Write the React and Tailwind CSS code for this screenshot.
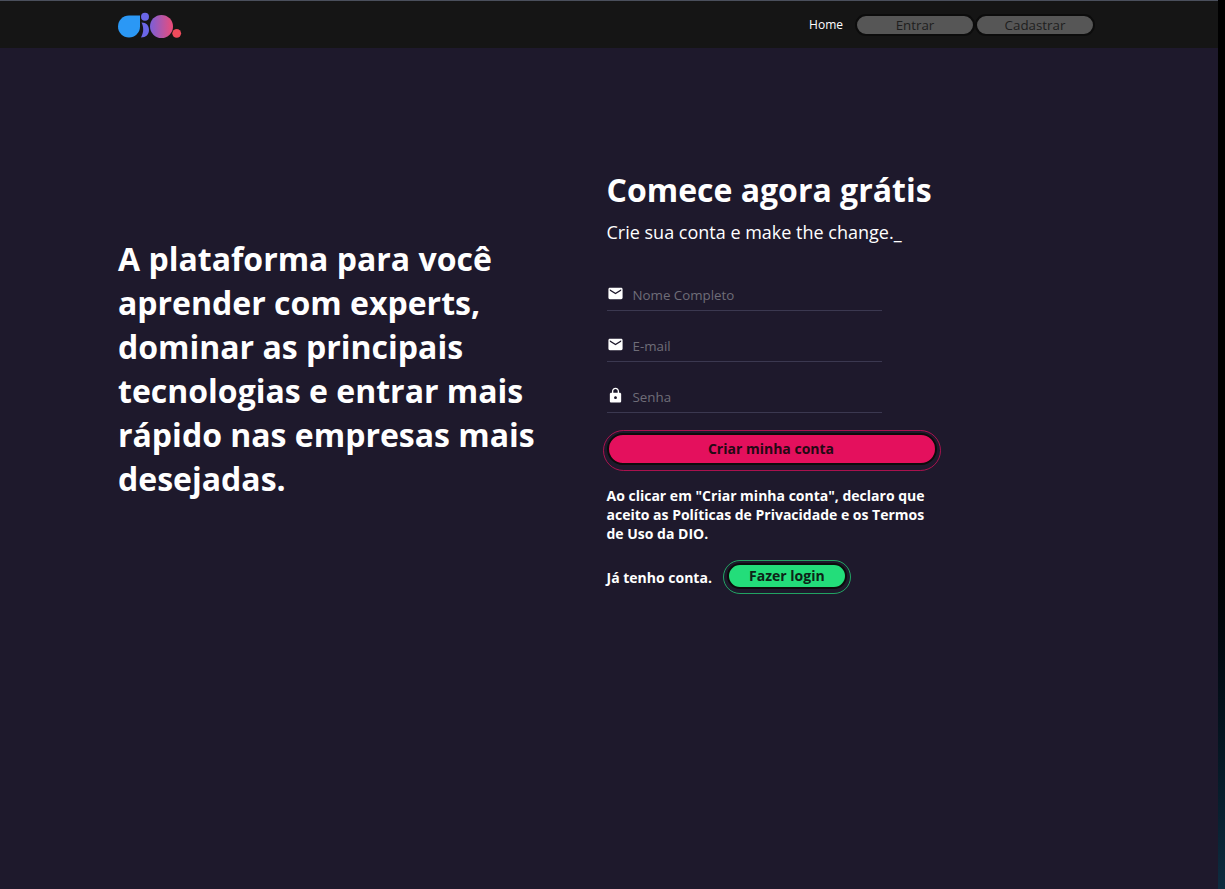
function Logo() {
  return (
    <svg width="64" height="26" viewBox="0 0 64 26" className="block">
      <defs>
        <linearGradient id="dio" x1="0" y1="0" x2="1" y2="0">
          <stop offset="0" stopColor="#7a5fd8" />
          <stop offset="1" stopColor="#ec4c78" />
        </linearGradient>
      </defs>
      <path d="M22 3.500V14.500a11 11 0 1 1-11-11z" fill="#2b98f5" />
      <circle cx="27" cy="4.800" r="4" fill="#6a66e6" />
      <path d="M23.500 10.500C28.500 10.500 31 13.500 31 18s-3 7.500-8 7.500c1.500-3 2.200-5.500 2.200-8s-.5-4.500-1.700-7z" fill="#6a66e6" />
      <circle cx="43.500" cy="14.500" r="11.500" fill="url(#dio)" />
      <circle cx="58.700" cy="21.300" r="4.400" fill="#ef4b5c" />
    </svg>
  )
}

function MailIcon() {
  return (
    <svg width="17" height="17" viewBox="0 0 24 24" fill="#fff">
      <path d="M20 4H4c-1.100 0-1.990.9-1.990 2L2 18c0 1.100.9 2 2 2h16c1.100 0 2-.9 2-2V6c0-1.100-.9-2-2-2zm0 4l-8 5-8-5V6l8 5 8-5v2z" />
    </svg>
  )
}

function LockIcon() {
  return (
    <svg width="17" height="17" viewBox="0 0 24 24" fill="#fff">
      <path d="M18 8h-1V6c0-2.760-2.240-5-5-5S7 3.240 7 6v2H6c-1.100 0-2 .9-2 2v10c0 1.100.9 2 2 2h12c1.100 0 2-.9 2-2V10c0-1.100-.9-2-2-2zm-6 9c-1.100 0-2-.9-2-2s.9-2 2-2 2 .9 2 2-.9 2-2 2zm3.100-9H8.900V6c0-1.710 1.390-3.100 3.100-3.100 1.710 0 3.100 1.390 3.100 3.100v2z" />
    </svg>
  )
}

function Field({ icon, placeholder }) {
  return (
    <div className="flex h-[34px] w-[275px] items-center border-b border-[#3b3850]">
      <span className="flex w-[17px] justify-center">{icon}</span>
      <span className="ml-[8.5px] translate-y-[2px] text-[13.33px] text-[#6f6d78]">{placeholder}</span>
    </div>
  )
}

export default function App() {
  return (
    <div className="flex h-[889px] overflow-hidden bg-black font-['Open_Sans',sans-serif]">
      <div className="flex w-[1218px] flex-col bg-[#1e192c]">
        <header className="h-[48px] border-t border-[#4a4f5c] bg-[#151515]">
          <div className="flex h-[47px] items-center justify-between pl-[118px] pr-[123px]">
            <Logo />
            <nav className="flex items-center">
              <a className="mr-3 text-[12px] text-white">Home</a>
              <button className="h-[22px] w-[120px] rounded-full border-2 border-[#0c0c0c] bg-[#565656] text-[13.33px] leading-[18px] text-[#1e1e1e]">Entrar</button>
              <button className="h-[22px] w-[120px] rounded-full border-2 border-[#0c0c0c] bg-[#565656] text-[13.33px] leading-[18px] text-[#1e1e1e]">Cadastrar</button>
            </nav>
          </div>
        </header>

        <main className="flex pl-[118px] pt-[121px]">
          <div className="w-[488.5px] pt-[68px]">
            <h1 className="w-[440px] text-[32px] font-bold leading-[44px] text-white">
              A plataforma para você aprender com experts, dominar as principais tecnologias e entrar mais rápido nas empresas mais desejadas.
            </h1>
          </div>

          <section className="w-[340px]">
            <h2 className="-mt-px text-[32px] font-bold leading-[44px] text-white">Comece agora grátis</h2>
            <p className="mt-[8px] text-[18px] leading-[24px] text-white">Crie sua conta e make the change._</p>

            <div className="ml-[0.5px] mt-[33px] flex flex-col gap-[17px]">
              <Field icon={<MailIcon />} placeholder="Nome Completo" />
              <Field icon={<MailIcon />} placeholder="E-mail" />
              <Field icon={<LockIcon />} placeholder="Senha" />
            </div>

            <div className="-ml-[3.5px] mt-[17px] w-[338px] rounded-full border border-[#e4105d]/70 px-[3px] pb-[5px] pt-[2px]">
              <button className="block h-[32px] w-full rounded-full border-2 border-[#0c0c0c] bg-[#e4105d] pr-[2px] text-[14px] font-bold leading-[28px] text-[#240914]">
                Criar minha conta
              </button>
            </div>

            <p className="mt-[15px] w-[330px] text-[14px] font-bold leading-[19px] text-white">
              Ao clicar em "Criar minha conta", declaro que aceito as Políticas de Privacidade e os Termos de Uso da DIO.
            </p>

            <div className="mt-[17px] flex items-center">
              <span className="text-[14px] font-bold text-white">Já tenho conta.</span>
              <div className="ml-[11px] rounded-full border border-[#23dd7a]/70 pb-[4px] pl-[3px] pr-[3px] pt-[2px]">
                <button className="block h-[26px] w-[120px] rounded-full border-2 border-[#0c0c0c] bg-[#23dd7a] text-[14px] font-bold leading-[22px] text-[#0d2417]">
                  Fazer login
                </button>
              </div>
            </div>
          </section>
        </main>
      </div>
      <div className="w-[7px] bg-gradient-to-b from-black from-50% to-[#0e2c40]" />
    </div>
  )
}
